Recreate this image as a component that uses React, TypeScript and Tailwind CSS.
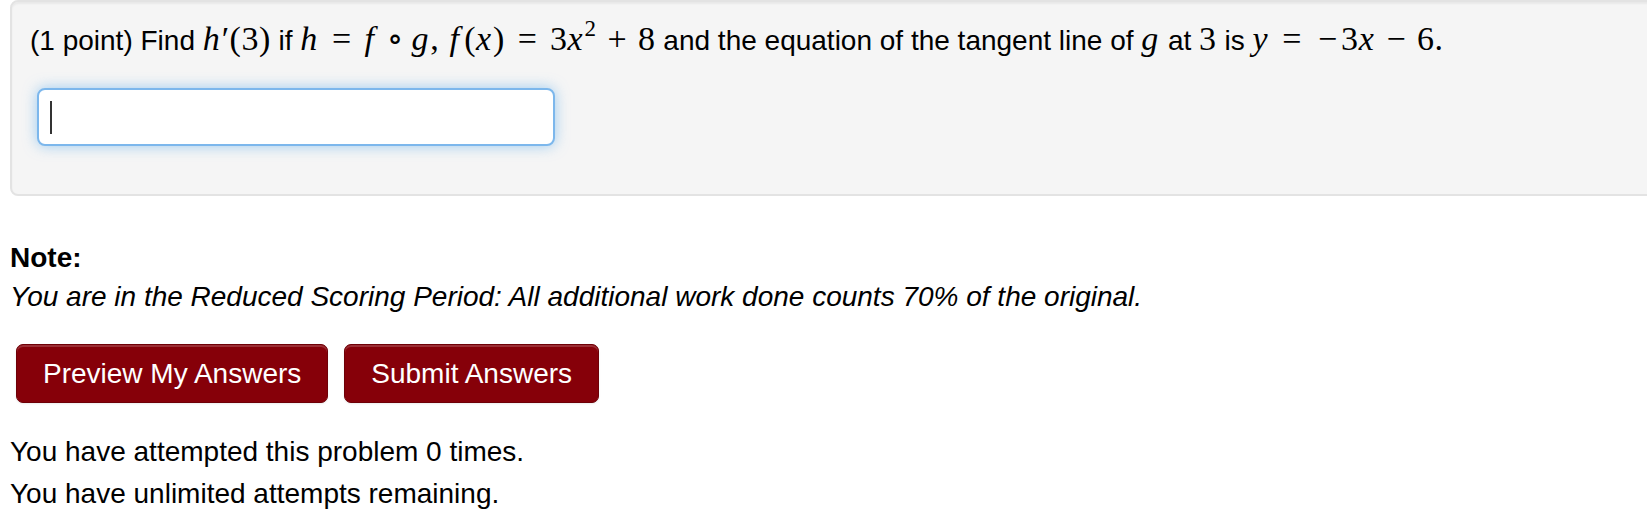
import type { ReactNode } from "react";

function M({ children }: { children: ReactNode }) {
  return (
    <span className="font-['Liberation_Serif','DejaVu_Serif',serif] text-[34px] leading-none tracking-[0.015em] whitespace-nowrap">
      {children}
    </span>
  );
}

function V({ children, wide }: { children: ReactNode; wide?: boolean }) {
  return <span className={wide ? "italic pr-[0.14em]" : "italic pr-[0.04em]"}>{children}</span>;
}

// relation (=): glyph plus thick space both sides, as TeX spaces it
function Rel({ children }: { children: ReactNode }) {
  return <span className="inline-block w-[1.33em] text-center">{children}</span>;
}

// binary operator (+, −, ∘): medium space both sides
function Bin({ children, narrow }: { children: ReactNode; narrow?: boolean }) {
  return (
    <span className={narrow ? "inline-block w-[0.95em] text-center" : "inline-block w-[1.22em] text-center"}>
      {children}
    </span>
  );
}

export default function App() {
  return (
    <div className="min-h-screen overflow-hidden bg-white font-['Liberation_Sans',Arial,sans-serif] text-black">
      <div className="ml-[10px] -mr-[40px] rounded-[8px] border-2 border-[#e3e3e3] bg-[#f5f5f5] pt-[19px] pl-[18px] pb-[48px] shadow-[inset_0_2px_2px_rgba(0,0,0,0.05)]">
        <p className="text-[28px] leading-[40px]">
          (1 point) Find{" "}
          <M>
            <V>h</V>′(3)
          </M>{" "}
          if{" "}
          <M>
            <V>h</V>
            <Rel>=</Rel>
            <V wide>f</V>
            <Bin narrow>∘</Bin>
            <V>g</V>,<span className="inline-block w-[0.3em]" />
            <V wide>f</V>(<V>x</V>)<Rel>=</Rel>3<V>x</V>
            <span className="relative -top-[0.6em] text-[23px]">2</span>
            <Bin>+</Bin>8
          </M>{" "}
          and the equation of the tangent line of{" "}
          <M>
            <V>g</V>
          </M>{" "}
          at <M>3</M> is{" "}
          <M>
            <V>y</V>
            <Rel>=</Rel>
            <span className="inline-block w-[0.78em] text-center">−</span>3<V>x</V>
            <Bin>−</Bin>6.
          </M>
        </p>
        <div className="mt-[27px] ml-[7px] flex h-[58px] w-[518px] items-center rounded-[8px] border-2 border-[#7cb7ec] bg-white pl-[11px] shadow-[0_0_14px_rgba(82,168,236,0.55)]">
          <span className="h-[33px] w-[2px] bg-[#333]" />
        </div>
      </div>

      <div className="ml-[10px] mt-[42px]">
        <p className="text-[28px] font-bold leading-[40px]">Note:</p>
        <p className="text-[28px] italic leading-[38px]">
          You are in the Reduced Scoring Period: All additional work done counts 70% of the original.
        </p>

        <div className="mt-[28px] ml-[6px] flex gap-[16px]">
          <button className="flex h-[59px] items-center rounded-[7px] border border-[#6e0007] bg-[#860009] px-[26px] text-[28px] text-white shadow-[inset_0_2px_0_rgba(255,255,255,0.18),0_1px_2px_rgba(0,0,0,0.08)]">
            Preview My Answers
          </button>
          <button className="flex h-[59px] items-center rounded-[7px] border border-[#6e0007] bg-[#860009] px-[26px] text-[28px] text-white shadow-[inset_0_2px_0_rgba(255,255,255,0.18),0_1px_2px_rgba(0,0,0,0.08)]">
            Submit Answers
          </button>
        </div>

        <div className="mt-[28px] text-[28px] leading-[42px]">
          <p>You have attempted this problem 0 times.</p>
          <p>You have unlimited attempts remaining.</p>
        </div>
      </div>
    </div>
  );
}
